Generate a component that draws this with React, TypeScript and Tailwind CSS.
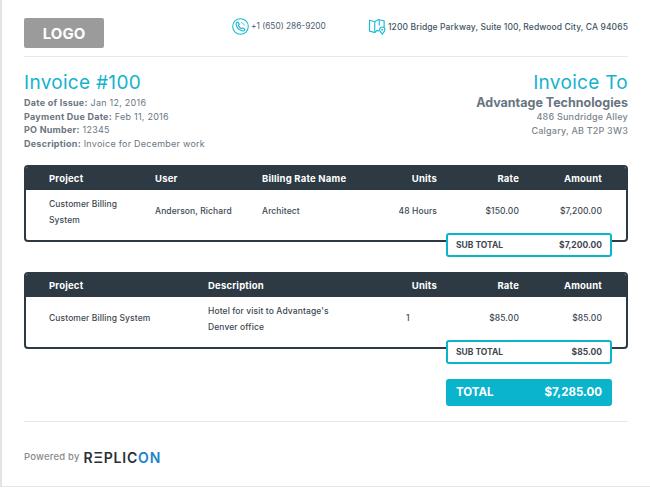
import { ReactNode } from 'react';

const cols1 = 'grid-cols-[106px_107px_100px_75px_82px_83px]';
const cols2 = 'grid-cols-[159px_154px_75px_82px_83px]';

function PhoneIcon() {
  return (
    <svg width="17" height="17" viewBox="0 0 24 24" fill="none" stroke="#19b9d2" strokeWidth="1.5" className="shrink-0">
      <circle cx="12" cy="12" r="11" />
      <path d="M8.2 5.5l2 3.2-1.3 1.6c.7 2 2.4 3.8 4.6 4.8l1.7-1.2 3 2.3c-.5 1.4-1.8 2.4-3.2 2.1C10 17.300 6.400 13.500 5.700 8.700c-.2-1.400 1-2.800 2.500-3.200z" />
      <path d="M13 6.500c2.300.3 4 2 4.400 4.300" strokeWidth="1.100" />
    </svg>
  );
}

function MapIcon() {
  return (
    <svg width="18" height="18" viewBox="0 0 24 24" fill="none" stroke="#19b9d2" strokeWidth="1.5" className="shrink-0">
      <path d="M15 17.500l-3-1-3 3-7-2V3l7 2 5-3 7.500 2v8" />
      <path d="M9 5v14M15 2.500V10" />
      <path d="M19 12c-2 0-3.500 1.500-3.500 3.400 0 2.300 3.500 6.100 3.500 6.100s3.500-3.800 3.500-6.100C22.500 13.500 21 12 19 12z" fill="#fff" />
      <circle cx="19" cy="15.500" r="1.300" fill="#19b9d2" stroke="none" />
    </svg>
  );
}

function Cell({ right, children }: { right?: boolean; children: ReactNode }) {
  return <div className={right ? 'text-right' : ''}>{children}</div>;
}

function SubTotal({ value }: { value: string }) {
  return (
    <div className="relative self-end mr-[16px] -mt-[9px] w-[166px] h-[24px] pt-[1px] bg-white border-2 border-[#0ab4cd] rounded-[3px] flex items-center justify-between pl-[8px] pr-[8px] text-[8.500px] font-bold text-[#3d4852]">
      <span>SUB TOTAL</span>
      <span>{value}</span>
    </div>
  );
}

function TableHead({ cols, labels }: { cols: string; labels: [string, boolean][] }) {
  return (
    <div className={`grid ${cols} items-center h-[23px] pt-[1px] pl-[23px] bg-[#2d3a43] text-white text-[9.500px] font-bold tracking-[0.2px]`}>
      {labels.map(([label, right]) => (
        <Cell key={label} right={right}>{label}</Cell>
      ))}
    </div>
  );
}

export default function App() {
  return (
    <div className="w-[650px] h-[487px] bg-white border-l-2 border-b border-[#e4e4e4] pl-[22px] pr-[22px] pt-[18px] font-[Inter,sans-serif] text-[#3d4852] flex flex-col">
      {/* Header */}
      <div className="h-[39px] border-b border-[#e8e8e8] flex items-start">
        <div className="w-[80px] h-[30px] pt-[2px] bg-[#9b9b9b] rounded-[2px] flex items-center justify-center text-white text-[15px] font-bold">LOGO</div>
        <div className="ml-[128px] flex items-center gap-[2px] text-[8.300px] text-[#4a6070]">
          <PhoneIcon />
          <span>+1 (650) 286-9200</span>
        </div>
        <div className="ml-auto flex items-center gap-[2px] text-[8.500px] font-medium text-[#3f5566] tracking-[0.1px]">
          <MapIcon />
          <span>1200 Bridge Parkway, Suite 100, Redwood City, CA 94065</span>
        </div>
      </div>

      {/* Invoice info */}
      <div className="flex justify-between mt-[13px] h-[95px]">
        <div>
          <h1 className="text-[19px] leading-[26px] text-[#14b3cc] tracking-[0.3px]">Invoice #100</h1>
          <div className="text-[9px] leading-[13.600px] text-[#6b7680] tracking-[0.25px]">
            <p><b>Date of Issue:</b> Jan 12, 2016</p>
            <p><b>Payment Due Date:</b> Feb 11, 2016</p>
            <p><b>PO Number:</b> 12345</p>
            <p><b>Description:</b> Invoice for December work</p>
          </div>
        </div>
        <div className="text-right">
          <h2 className="text-[19px] leading-[26px] text-[#14b3cc] tracking-[0.3px]">Invoice To</h2>
          <p className="text-[12.500px] leading-[14px] font-bold text-[#68747f]">Advantage Technologies</p>
          <div className="text-[9px] leading-[13.600px] text-[#7b858e] font-medium tracking-[0.2px]">
            <p>486 Sundridge Alley</p>
            <p>Calgary, AB T2P 3W3</p>
          </div>
        </div>
      </div>

      {/* Table 1 */}
      <div className="flex flex-col">
        <div className="border-2 border-[#2d3a43] rounded-[4px] h-[77px] overflow-hidden">
          <TableHead cols={cols1} labels={[['Project', false], ['User', false], ['Billing Rate Name', false], ['Units', true], ['Rate', true], ['Amount', true]]} />
          <div className={`grid ${cols1} items-center h-[43px] pl-[23px] text-[8.500px] font-medium tracking-[0.1px]`}>
            <div className="leading-[16px] w-[80px]">Customer Billing System</div>
            <div>Anderson, Richard</div>
            <div>Architect</div>
            <Cell right>48 Hours</Cell>
            <Cell right>$150.00</Cell>
            <Cell right>$7,200.00</Cell>
          </div>
        </div>
        <SubTotal value="$7,200.00" />
      </div>

      {/* Table 2 */}
      <div className="flex flex-col mt-[15px]">
        <div className="border-2 border-[#2d3a43] rounded-[4px] h-[77px] overflow-hidden">
          <TableHead cols={cols2} labels={[['Project', false], ['Description', false], ['Units', true], ['Rate', true], ['Amount', true]]} />
          <div className={`grid ${cols2} items-center h-[43px] pl-[23px] text-[8.500px] font-medium tracking-[0.1px]`}>
            <div>Customer Billing System</div>
            <div className="leading-[16px] w-[130px]">Hotel for visit to Advantage's Denver office</div>
            <div className="pl-[44px]">1</div>
            <Cell right>$85.00</Cell>
            <Cell right>$85.00</Cell>
          </div>
        </div>
        <SubTotal value="$85.00" />
      </div>

      {/* Total */}
      <div className="self-end mr-[16px] mt-[15px] w-[166px] h-[27px] bg-[#0ab4cd] rounded-[3px] flex items-center justify-between px-[10px] text-white font-bold text-[11.500px]">
        <span>TOTAL</span>
        <span>$7,285.00</span>
      </div>

      {/* Footer */}
      <div className="mt-[15px] border-t border-[#e8e8e8] pt-[25px] flex items-center gap-[4px]">
        <span className="text-[9.500px] text-[#8a8a8a] font-medium tracking-[0.2px]">Powered by</span>
        <span className="text-[14px] font-semibold tracking-[0.8px] text-[#2b2f33]">
          RΞPLIC<span className="text-[#1b84c9]">ON</span>
        </span>
      </div>
    </div>
  );
}
